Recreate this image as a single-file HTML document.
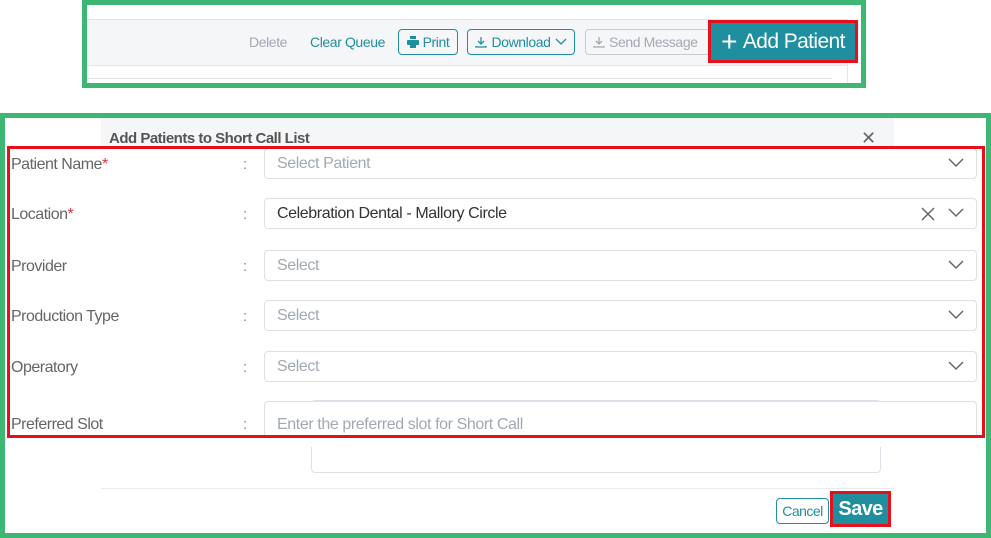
<!DOCTYPE html>
<html><head><style>
*{box-sizing:border-box;margin:0;padding:0}
body{width:991px;height:538px;background:#fff;position:relative;font-family:"Liberation Sans",sans-serif;overflow:hidden}
.abs{position:absolute}
.t{font-size:14px;color:#1f8fa0;letter-spacing:-0.4px}
.btn{position:absolute;border:1px solid #1f8fa0;border-radius:4px;height:26px;top:29px;font-size:14px;color:#1f8fa0;display:flex;align-items:center;justify-content:center;letter-spacing:-0.4px}
.lbl{position:absolute;left:11px;font-size:16px;color:#666;letter-spacing:-0.5px}
.col{position:absolute;left:243px;font-size:15px;color:#888}
.inp{position:absolute;left:264px;width:713px;height:31px;border:1px solid #dde0e6;border-radius:4px;font-size:16px;color:#a3a9b2;padding-left:12px;display:flex;align-items:center;letter-spacing:-0.4px;background:#fff}
.chev{position:absolute;right:12px;top:9px}
</style></head><body>
<div class="abs" style="left:82px;top:0;width:784px;height:88px;border:5px solid #3fb774;background:#fff"></div>
<div class="abs" style="left:87px;top:19px;width:761px;height:47px;background:#f5f6f8;border-top:1px solid #e3e5e8;border-bottom:1px solid #e3e5e8"></div>
<div class="abs" style="left:847px;top:19px;width:1px;height:64px;background:#e3e5e8"></div>
<div class="abs" style="left:87px;top:78px;width:745px;height:1px;background:#e3e5e8"></div>
<div class="abs t" style="left:249px;top:34px;color:#a3a9b2">Delete</div>
<div class="abs t" style="left:310px;top:34px">Clear Queue</div>
<div class="btn" style="left:398px;width:60px"><svg width="12" height="12" viewBox="0 0 12 12" style="margin-right:4px"><rect x="3" y="0" width="6" height="3" fill="#1f8fa0"/><rect x="0" y="4" width="12" height="5" rx="1" fill="#1f8fa0"/><rect x="3" y="8" width="6" height="4" fill="#1f8fa0"/></svg>Print</div>
<div class="btn" style="left:467px;width:108px"><svg width="12" height="12" viewBox="0 0 12 12" style="margin-right:4px"><path d="M6 1v7M3 5l3 3 3-3M1 10v1h10v-1" stroke="#1f8fa0" fill="none" stroke-width="1.3"/></svg>Download<svg width="12" height="8" viewBox="0 0 12 8" style="margin-left:4px"><path d="M1 1l5 5 5-5" stroke="#1f8fa0" fill="none" stroke-width="1.3"/></svg></div>
<div class="btn" style="left:585px;width:130px;border-color:#c8ccd2;color:#a3a9b2;justify-content:flex-start;padding-left:7px"><svg width="12" height="12" viewBox="0 0 12 12" style="margin-right:4px"><path d="M6 1v7M3 5l3 3 3-3M1 10v1h10v-1" stroke="#a3a9b2" fill="none" stroke-width="1.3"/></svg>Send Message</div>
<div class="abs" style="left:708px;top:20px;width:150px;height:43px;background:#1f8fa0;border:3px solid #e5101b;color:#fff;font-size:21px;display:flex;align-items:center;justify-content:center;letter-spacing:-0.6px"><span style="font-size:28px;margin-right:6px;line-height:1">+</span>Add Patient</div>

<div class="abs" style="left:0;top:113px;width:991px;height:425px;border:5px solid #3fb774;background:#fff"></div>
<div class="abs" style="left:101px;top:118px;width:793px;height:30px;background:#f5f6f8"></div>
<div class="abs" style="left:109px;top:130px;font-size:15px;font-weight:bold;color:#555;letter-spacing:-0.5px">Add Patients to Short Call List</div>
<div class="abs" style="left:861px;top:128px;font-size:18px;color:#666">✕</div>

<div class="inp" style="left:311px;top:400px;width:570px;height:73px"></div>
<div class="abs" style="left:101px;top:488px;width:793px;height:1px;background:#e8eaed"></div>
<div class="abs" style="left:776px;top:498px;width:53px;height:26px;border:1px solid #1f8fa0;border-radius:4px;font-size:14px;color:#1f8fa0;display:flex;align-items:center;justify-content:center;letter-spacing:-0.5px">Cancel</div>
<div class="abs" style="left:830px;top:491px;width:61px;height:36px;background:#1f8fa0;border:3px solid #e5101b;color:#fff;font-size:20px;font-weight:bold;display:flex;align-items:center;justify-content:center;letter-spacing:-0.6px">Save</div>

<div class="lbl" style="top:156px">Patient Name<span style="color:#d9363e">*</span></div>
<div class="col" style="top:156px">:</div>
<div class="inp" style="top:148px">Select Patient<svg class="chev" width="16" height="10" viewBox="0 0 16 10"><path d="M1 1l7 7 7-7" stroke="#666" fill="none" stroke-width="1.5"/></svg></div>
<div class="lbl" style="top:206px">Location<span style="color:#d9363e">*</span></div>
<div class="col" style="top:206px">:</div>
<div class="inp" style="top:198px;color:#333">Celebration Dental - Mallory Circle<svg class="abs" style="right:40px;top:7px" width="16" height="16" viewBox="0 0 16 16"><path d="M2 2l12 12M14 2L2 14" stroke="#666" stroke-width="1.5"/></svg><svg class="chev" width="16" height="10" viewBox="0 0 16 10"><path d="M1 1l7 7 7-7" stroke="#666" fill="none" stroke-width="1.5"/></svg></div>
<div class="lbl" style="top:258px">Provider</div>
<div class="col" style="top:258px">:</div>
<div class="inp" style="top:250px">Select<svg class="chev" width="16" height="10" viewBox="0 0 16 10"><path d="M1 1l7 7 7-7" stroke="#666" fill="none" stroke-width="1.5"/></svg></div>
<div class="lbl" style="top:308px">Production Type</div>
<div class="col" style="top:308px">:</div>
<div class="inp" style="top:300px">Select<svg class="chev" width="16" height="10" viewBox="0 0 16 10"><path d="M1 1l7 7 7-7" stroke="#666" fill="none" stroke-width="1.5"/></svg></div>
<div class="lbl" style="top:359px">Operatory</div>
<div class="col" style="top:359px">:</div>
<div class="inp" style="top:351px">Select<svg class="chev" width="16" height="10" viewBox="0 0 16 10"><path d="M1 1l7 7 7-7" stroke="#666" fill="none" stroke-width="1.5"/></svg></div>
<div class="lbl" style="top:416px">Preferred Slot</div>
<div class="col" style="top:416px">:</div>
<div class="inp" style="top:401px;height:40px;align-items:flex-end;padding-bottom:6px">Enter the preferred slot for Short Call</div>
<div class="abs" style="left:264px;top:437px;width:720px;height:10px;background:#fff"></div>
<div class="abs" style="left:7px;top:146px;width:978px;height:292px;border:3px solid #e5101b"></div>
</body></html>
